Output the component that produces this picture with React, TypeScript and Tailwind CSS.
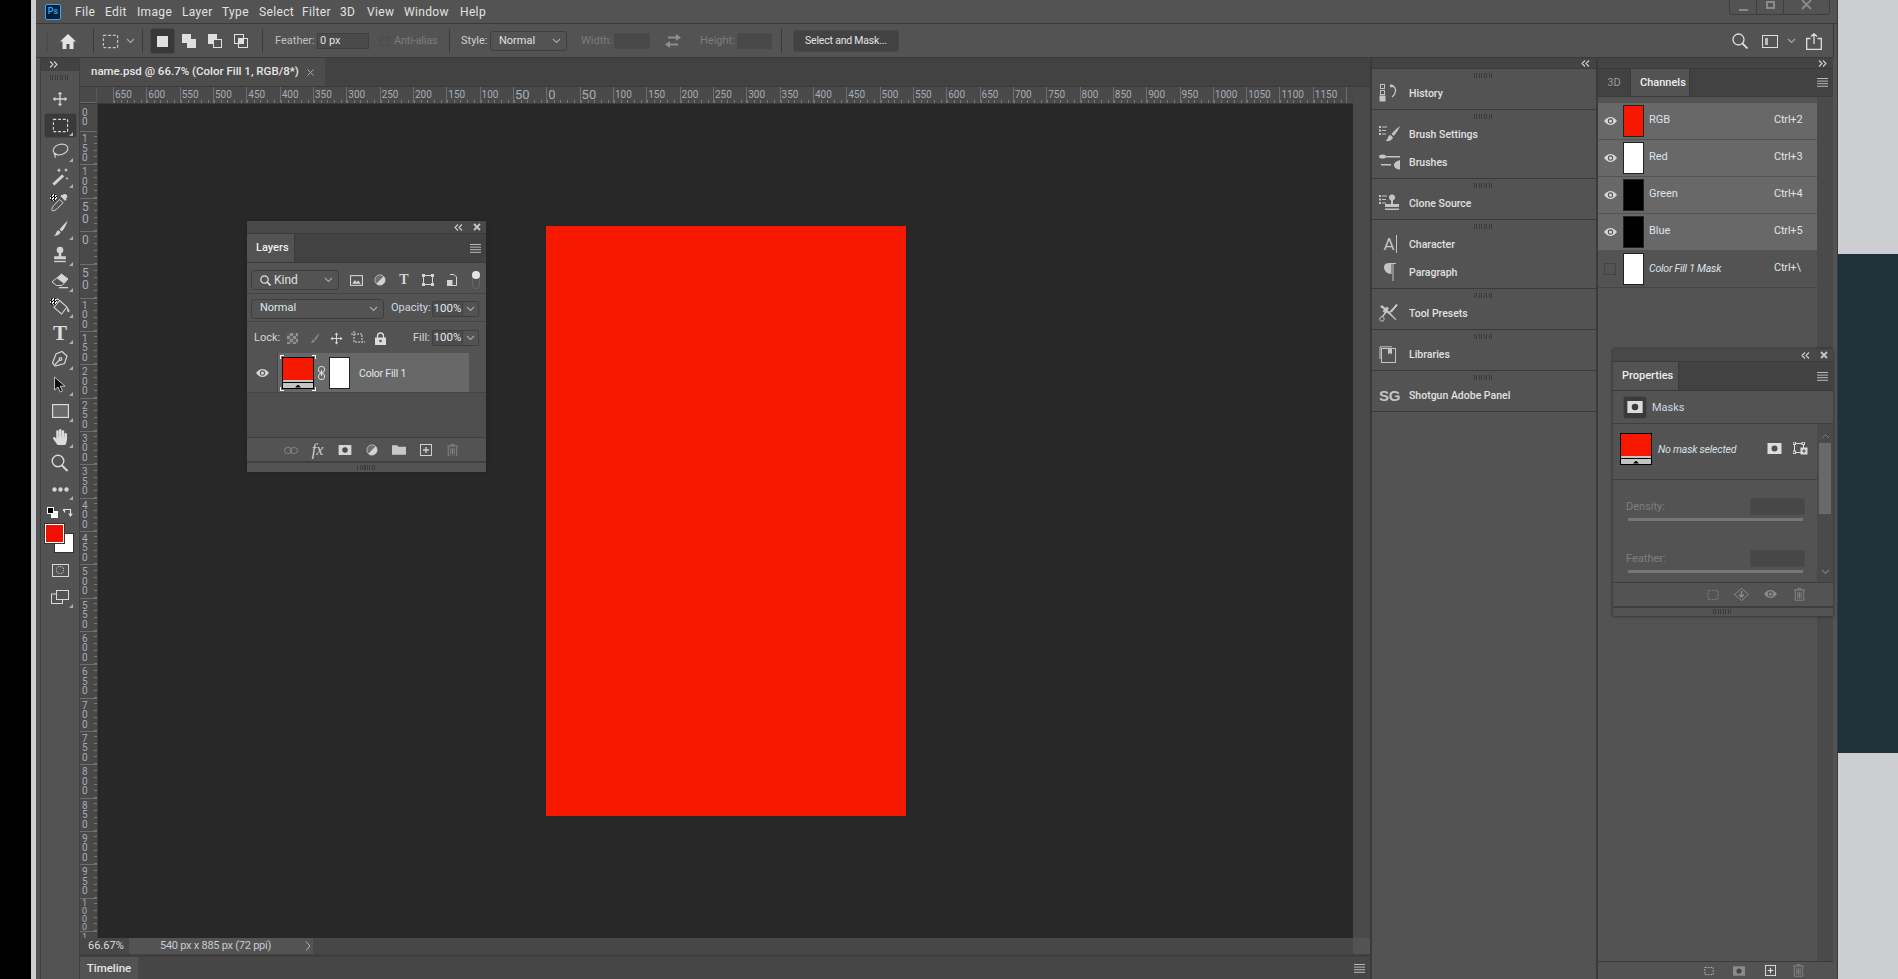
import React from "react";
import { FaHandPaper } from "react-icons/fa";

const Ic = ({ s = 18, c = "#d4d4d4", children, vb = "0 0 24 24" }: { s?: number; c?: string; children: React.ReactNode; vb?: string }) => (
  <svg width={s} height={s} viewBox={vb} fill={c} stroke="none" className="flex-none">
    {children}
  </svg>
);

const Chevrons = ({ dir = "left" }: { dir?: "left" | "right" }) => (
  <svg width="9" height="7" viewBox="0 0 9 7" fill="none" stroke="#d0d0d0" strokeWidth="1.1" className="flex-none">
    {dir === "left" ? <path d="M4 .5 1 3.5l3 3M8 .5l-3 3 3 3" /> : <path d="M1 .5l3 3-3 3M5 .5l3 3-3 3" />}
  </svg>
);
const Close = () => (
  <svg width="8" height="8" viewBox="0 0 8 8" stroke="#c8c8c8" strokeWidth="1.8" className="flex-none"><path d="M1 1l6 6M7 1 1 7" /></svg>
);
const Burger = () => (
  <svg width="11" height="9" viewBox="0 0 11 9" fill="#b8b8b8" className="flex-none">
    <rect y="0" width="11" height="1" /><rect y="2.6" width="11" height="1" /><rect y="5.2" width="11" height="1" /><rect y="7.8" width="11" height="1" />
  </svg>
);
const Chevron = ({ c = "#a8a8a8" }: { c?: string }) => (
  <svg width="9" height="6" viewBox="0 0 9 6" fill="none" stroke={c} strokeWidth="1.1" className="flex-none"><path d="M1 1l3.5 3.5L8 1" /></svg>
);
const Eye = ({ c = "#d6d6d6", w = 13 }: { c?: string; w?: number }) => (
  <svg width={w} height={w * 0.62} viewBox="0 0 16 10" className="flex-none">
    <path d="M0 5c2.5-3.4 5-5 8-5s5.500 1.600 8 5c-2.500 3.400-5 5-8 5S2.500 8.400 0 5z" fill={c} />
    <circle cx="8" cy="5" r="3.3" fill="#555" /><circle cx="8" cy="5" r="2" fill={c} />
  </svg>
);
const Grip = () => (
  <div className="h-[5px] w-[20px] flex-none bg-[repeating-linear-gradient(90deg,#3b3b3b_0,#3b3b3b_1px,transparent_1px,transparent_2.500px)]" />
);
const Tri = () => (
  <span className="absolute right-[6px] bottom-[2px] h-[4px] w-[4px] bg-[#b0b0b0] [clip-path:polygon(100%_0,100%_100%,0_100%)]" />
);
const Checker = () => (
  <span className="absolute left-[9px] top-[4px] h-[7px] w-[7px] rounded-full bg-[conic-gradient(#111_25%,#eee_0_50%,#111_0_75%,#eee_0)] bg-[length:3px_3px]" />
);

const BrushPath = "M21 2c-3 3-7 7-9.500 10.500l2.500 2.500C17 12 19.800 7 21 2zM10.500 13.500c-2 .5-2.800 1.700-3.300 3.500-.4 1.300-1.300 2.300-3 3 3.600.6 7.300-.6 8.500-4z";
const StampShape = (
  <g><circle cx="12" cy="6" r="4" /><path d="M10.500 9h3v4.500H19V17H5v-3.500h5.500z" /><rect x="5" y="19" width="14" height="1.600" /></g>
);
const ListDots = (
  <g><rect x="0" y="1" width="2" height="2" /><rect x="3" y="1.500" width="5" height="1" /><rect x="0" y="4.500" width="2" height="2" /><rect x="3" y="5" width="4" height="1" /><rect x="0" y="8" width="2" height="2" /><rect x="3" y="8.500" width="4" height="1" /></g>
);

const MarqueeIcon = ({ s = 18, c = "#d8d8d8" }: { s?: number; c?: string }) => (
  <svg width={s} height={s} viewBox="0 0 18 18" fill="none" stroke={c} strokeWidth="1.200" strokeDasharray="3 2" className="flex-none"><rect x="1.500" y="2.500" width="15" height="13" /></svg>
);
const HalfCircle = ({ s = 14, c = "#d4d4d4" }: { s?: number; c?: string }) => (
  <svg width={s} height={s} viewBox="0 0 14 14" className="flex-none">
    <circle cx="7" cy="7" r="6" fill="#6e6e6e" stroke={c} strokeWidth=".8" />
    <path d="M11.240 2.760A6 6 0 0 1 2.760 11.240z" fill={c} />
  </svg>
);
const Trash = ({ c = "#8b8b8b", s = 13 }: { c?: string; s?: number }) => (
  <svg width={s} height={s * 1.15} viewBox="0 0 13 15" fill="none" stroke={c} strokeWidth="1" className="flex-none">
    <path d="M0 2.500h13M4.500 2.500V.5h4v2M1.500 2.500v12h10v-12M4.500 5v7.500M6.500 5v7.500M8.500 5v7.500" />
  </svg>
);
const PlusSq = ({ c = "#d4d4d4", s = 12 }: { c?: string; s?: number }) => (
  <svg width={s} height={s} viewBox="0 0 12 12" fill="none" stroke={c} className="flex-none"><rect x=".5" y=".5" width="11" height="11" /><path d="M6 3v6M3 6h6" strokeWidth="1.300" /></svg>
);
const MaskIcon = ({ w = 14, h = 11, c = "#e0e0e0", d = "#505050" }: { w?: number; h?: number; c?: string; d?: string }) => (
  <svg width={w} height={h} viewBox="0 0 14 11" className="flex-none"><rect width="14" height="11" fill={c} /><circle cx="7" cy="5.500" r="3" fill={d} /></svg>
);

type Tool = { el: React.ReactNode; tri?: boolean; check?: boolean; sel?: boolean };
const tools: Tool[] = [
  { el: <Ic s={16}><path d="M12 1l3.500 4H13v6h6V8.500l4 3.500-4 3.500V13h-6v6h2.500L12 23l-3.500-4H11v-6H5v2.500L1 12l4-3.500V11h6V5H8.500z" /></Ic> },
  { el: <MarqueeIcon s={17} />, tri: true, sel: true },
  { el: <svg width="18" height="18" viewBox="0 0 18 18" fill="none" stroke="#d4d4d4" strokeWidth="1.100"><ellipse cx="9.500" cy="7.500" rx="7.500" ry="5.200" transform="rotate(-15 9.500 7.500)" /><path d="M3.500 11c-1 1.300.5 2 1.300 1.500.6-.5-.2-1.300-.8-.6-.3.800.6 2.200 0 4" /></svg>, tri: true },
  { el: <svg width="20" height="20" viewBox="0 0 20 20" fill="#d4d4d4"><path d="M12 7.500l2.200 1.800L4.500 18.500 2.300 16.500z" /><path d="M9 1l.7 1.600L11 3.300l-1.300.7L9 5.500l-.7-1.500L7 3.300l1.300-.7zM16 1l.6 1.300L18 3l-1.400.7L16 5l-.6-1.300L14 3l1.400-.7zM17 10l.5 1 1 .5-1 .5-.5 1-.5-1-1-.5 1-.5z" /></svg>, tri: true },
  { el: <svg width="20" height="20" viewBox="0 0 20 20" fill="#d4d4d4"><path d="M13 1.500c1.500-1.300 4-.3 4.300 1.500.2 1-.4 2-1.300 2.700l.6.800-1.400 1.400-4.800-4.800 1.400-1.400.8.600z" /><path d="M9.800 6.500 3.200 13c-1 1-.9 2.200-1.500 3.500-.3.800.4 1.700 1.400 1.300 1.300-.6 2.500-.5 3.500-1.500l6.400-6.500z" fill="none" stroke="#d4d4d4" /></svg>, check: true },
  { el: <Ic s={20}><path d={BrushPath} /></Ic>, tri: true },
  { el: <Ic s={20}>{StampShape}</Ic>, tri: true },
  { el: <svg width="20" height="20" viewBox="0 0 20 20"><path d="M11.500 3 18 8l-6 6.500H6.500L2 11z" fill="none" stroke="#d4d4d4" /><path d="M11.500 3 18 8l-4 4.500L7 7.500z" fill="#d4d4d4" /><rect x="9" y="16" width="9" height="1.300" fill="#d4d4d4" /></svg>, tri: true },
  { el: <svg width="20" height="20" viewBox="0 0 20 20" fill="none" stroke="#d4d4d4" strokeWidth="1.100"><path d="M9.500 3.500 17 10l-5.500 7L4 10.500z" /><path d="M5.500 5C5 3 7 1.500 9 2.500" /><path d="M17 10c1.500 1.500 2.500 3 2.500 4 0 1.500-2 1.500-2.200 0 0-1.200-.3-2.500-.3-4z" fill="#d4d4d4" stroke="none" /></svg>, check: true, tri: true },
  { el: <span className="font-['Liberation_Serif',serif] text-[21px] font-bold leading-none text-[#dcdcdc]">T</span>, tri: true },
  { el: <svg width="20" height="20" viewBox="0 0 20 20" fill="none" stroke="#d4d4d4" strokeWidth="1.200"><path d="M12 2.500l5 4.500-2.500 7.500-9.500 2.500L2.500 14 6 5z" /><path d="M5 15.500 9.500 11" /><circle cx="10.500" cy="10" r="1.300" /></svg>, tri: true },
  { el: <svg width="14" height="18" viewBox="0 0 14 18"><path d="M1.500 1v13l3.500-3 2.200 5 2.300-1-2.200-4.800H12z" fill="#111" stroke="#ddd" strokeWidth=".8" /></svg>, tri: true },
  { el: <svg width="17" height="14" viewBox="0 0 17 14"><rect x=".6" y=".6" width="15.800" height="12.800" fill="#6a6a6a" stroke="#e2e2e2" strokeWidth="1.100" /></svg>, tri: true },
  { el: <FaHandPaper size={16} color="#dcdcdc" />, tri: true },
  { el: <svg width="18" height="18" viewBox="0 0 18 18" fill="none" stroke="#d8d8d8" strokeWidth="1.400"><circle cx="7" cy="7" r="5.800" /><path d="M11 11.500 16.500 17" strokeWidth="2" /></svg> },
  { el: <svg width="17" height="5" viewBox="0 0 17 5" fill="#d4d4d4"><circle cx="2.500" cy="2.500" r="2.200" /><circle cx="8.500" cy="2.500" r="2.200" /><circle cx="14.500" cy="2.500" r="2.200" /></svg>, tri: true },
];

const dockGroups = [
  [{ i: <svg width="20" height="18" viewBox="0 0 20 18" fill="none" stroke="#c4c4c4"><rect x="1.500" y=".5" width="4" height="4" /><rect x="1.500" y="6.500" width="4" height="4" /><rect x="1" y="12" width="5" height="5" fill="#c4c4c4" /><path d="M11 2.500h4M11 1c4 .5 6 3 5.500 6.500-.3 2.500-2 4.500-3.500 5.500" strokeWidth="1.300" /></svg>, t: "History" }],
  [
    { i: <svg width="22" height="18" viewBox="0 0 22 18" fill="#c4c4c4"><g>{ListDots}</g><path d="M21 1c-3 2-6 5-8.500 8l2.300 2c2.300-3 4.700-6.400 6.200-10zM11.500 10c-1.500.3-2 1.200-2.500 2.500-.4 1.300-1 2.500-2.500 3.500 3 .5 6.500-.3 7.500-3.500z" /></svg>, t: "Brush Settings" },
    { i: <svg width="22" height="16" viewBox="0 0 22 16" fill="#c4c4c4"><ellipse cx="3.500" cy="2.500" rx="3.500" ry="2" /><rect x="7" y="2" width="14" height="1.500" /><rect x="2" y="10" width="10" height="1.500" /><path d="M21 6v9.500c-3 0-6-1.500-6-4.500 0-2.500 3-4 6-5z" /></svg>, t: "Brushes" },
  ],
  [{ i: <svg width="22" height="18" viewBox="0 0 22 18" fill="#c4c4c4"><g>{ListDots}</g><circle cx="13" cy="3.500" r="3" /><path d="M12 6h2v4h6v3H6v-3h6z" /><rect x="6" y="14.500" width="14" height="1.500" /></svg>, t: "Clone Source" }],
  [
    { i: <div className="flex w-[22px] items-center justify-center gap-[1px]"><span className="text-[17px] leading-none text-[#c4c4c4]">A</span><span className="h-[18px] w-px bg-[#c4c4c4]" /></div>, t: "Character" },
    { i: <svg width="12" height="18" viewBox="0 0 12 18" fill="#c4c4c4" className="ml-[5px]"><path d="M0 4c0-2.500 2-4 5-4h7v1H9.500v17H8.500V1h-1v10C3 11 0 8 0 4z" /></svg>, t: "Paragraph" },
  ],
  [{ i: <svg width="20" height="18" viewBox="0 0 20 18" fill="#c4c4c4"><path d="M1 3 3 1l3.500 3 1.500-1.500 2 2L8.500 6l9 9.500-1 .5L7 7.500 5.500 9l-2-2L5 5.500z" /><path d="M18 1 10 9 8 7 3 13" stroke="#c4c4c4" strokeWidth="1.500" fill="none" /><circle cx="3" cy="15" r="2.200" fill="#4f4f4f" stroke="#c4c4c4" /><path d="M18 .5 12 8" stroke="#c4c4c4" strokeWidth="2" /></svg>, t: "Tool Presets" }],
  [{ i: <svg width="17" height="17" viewBox="0 0 17 17" fill="none" stroke="#c4c4c4"><path d="M1 13V.8h12" /><rect x="2.500" y="2.500" width="14" height="14" /><path d="M9 2.500h4v6L11 7 9 8.500z" fill="#c4c4c4" stroke="none" /></svg>, t: "Libraries" }],
  [{ i: <span className="w-[22px] font-['Liberation_Sans',sans-serif] text-[15px] font-bold leading-none tracking-[-0.3px] text-[#c4c4c4]">SG</span>, t: "Shotgun Adobe Panel" }],
];

const channels = [
  { n: "RGB", k: "Ctrl+2", th: "bg-[#f71800]", on: true },
  { n: "Red", k: "Ctrl+3", th: "bg-white", on: true },
  { n: "Green", k: "Ctrl+4", th: "bg-black", on: true },
  { n: "Blue", k: "Ctrl+5", th: "bg-black", on: true },
  { n: "Color Fill 1 Mask", k: "Ctrl+\\", th: "bg-white", on: false },
];

const hLabels = [650, 600, 550, 500, 450, 400, 350, 300, 250, 200, 150, 100, 50, 0, 50, 100, 150, 200, 250, 300, 350, 400, 450, 500, 550, 600, 650, 700, 750, 800, 850, 900, 950, 1000, 1050, 1100, 1150, 1200];
const vLabels = [150, 100, 50, 0, 50, 100, 150, 200, 250, 300, 350, 400, 450, 500, 550, 600, 650, 700, 750, 800, 850, 900, 950, 1000];
const menus = [
  ["File", "w-[30px]"], ["Edit", "w-[32px]"], ["Image", "w-[45px]"], ["Layer", "w-[40px]"], ["Type", "w-[37px]"], ["Select", "w-[43px]"], ["Filter", "w-[38px]"], ["3D", "w-[27px]"], ["View", "w-[37px]"], ["Window", "w-[56px]"], ["Help", "w-[34px]"],
];

const LayerThumb = () => (
  <div className="flex h-[32px] w-[32px] flex-col border border-black bg-[#c4c4c4]">
    <div className="h-[22px] flex-none bg-[#f71800]" />
    <div className="mt-[2px] h-px bg-black" />
    <div className="mx-auto mt-[2px] h-[3px] w-[6px] bg-black [clip-path:polygon(50%_0,100%_100%,0_100%)]" />
  </div>
);
const Sep = () => <div className="h-[24px] w-px flex-none bg-[#3a3a3a]" />;

const Field = ({ t }: { t: string }) => (
  <div className="flex h-[16px] flex-none">
    <div className="flex w-[31px] items-center justify-center rounded-l-[2px] border border-[#3f3f3f] bg-[#4c4c4c] text-[11.500px] text-[#e4e8ec]">{t}</div>
    <div className="flex w-[16px] items-center justify-center rounded-r-[2px] border border-l-0 border-[#3f3f3f]"><Chevron /></div>
  </div>
);

const PanelHead = () => (
  <div className="flex h-[13px] flex-none items-center justify-end gap-[10px] border-b border-[#3a3a3a] bg-[#484848] pr-[5px]">
    <Chevrons /><Close />
  </div>
);

export default function App() {
  return (
    <div className="relative flex h-[979px] w-[1898px] overflow-hidden bg-black font-['Roboto',sans-serif] text-[11px] text-[#dcdcdc]">
      <div className="w-[31px] flex-none bg-black" />
      <div className="w-[5px] flex-none bg-[#cdced2]" />

      {/* Application */}
      <div className="flex w-[1802px] flex-none flex-col border-r border-[#3a3a3a] bg-[#535353]">
        {/* Menu bar */}
        <div className="flex h-[24px] flex-none items-center border-b border-[#3a3a3a] pl-[9px]">
          <div className="mr-[14px] flex h-[16px] w-[16px] flex-none items-center justify-center rounded-[2px] border border-[#31a8ff] bg-[#001e36] text-[9px] font-medium leading-none text-[#31a8ff]">Ps</div>
          {menus.map(([m, w]) => (
            <div key={m} className={`${w} flex-none text-[12px] tracking-[0.35px] text-[#e2e2e2]`}>{m}</div>
          ))}
          <div className="ml-auto mr-[7px] flex h-[15px] w-[101px] self-start rounded-b-[3px] border border-t-0 border-[#3f3f3f]">
            <div className="flex w-[27px] items-end justify-center border-r border-[#3f3f3f] pb-[3px]"><div className="h-[2px] w-[9px] bg-[#8a8a8a]" /></div>
            <div className="flex w-[27px] items-start justify-center border-r border-[#3f3f3f] pt-[1px]"><div className="h-[8px] w-[9px] border-2 border-[#8a8a8a]" /></div>
            <div className="flex flex-1 items-start justify-center"><svg width="11" height="10" viewBox="0 0 11 10" stroke="#8a8a8a" strokeWidth="1.800"><path d="M1 0l9 9M10 0 1 9" /></svg></div>
          </div>
        </div>

        {/* Options bar */}
        <div className="mr-[3px] flex h-[34px] flex-none items-center border-r border-b border-[#3a3a3a] pt-[1px]">
          <div className="ml-[10px] h-[20px] w-[2px] flex-none bg-[repeating-linear-gradient(0deg,#444_0,#444_1px,transparent_1px,transparent_2px)]" />
          <div className="ml-[12px] flex-none"><svg width="16" height="15" viewBox="0 0 16 15" fill="#e4e4e4"><path d="M8 0 0 7.500h2.500V15h4v-5h3v5h4V7.500H16z" /></svg></div>
          <div className="ml-[17px]"><Sep /></div>
          <div className="ml-[8px]"><MarqueeIcon s={17} c="#c8c8c8" /></div>
          <div className="ml-[7px]"><Chevron /></div>
          <div className="ml-[7px]"><Sep /></div>
          <div className="ml-[7px] flex h-[26px] w-[25px] flex-none items-center justify-center rounded-[3px] border border-[#474747] bg-[#383838]"><div className="h-[11px] w-[11px] bg-[#e0e0e0]" /></div>
          <div className="relative ml-[7px] h-[14px] w-[14px] flex-none"><div className="absolute left-0 top-0 h-[9px] w-[9px] bg-[#e0e0e0]" /><div className="absolute bottom-0 right-0 h-[9px] w-[9px] bg-[#e0e0e0]" /></div>
          <div className="relative ml-[12px] h-[14px] w-[14px] flex-none"><div className="absolute left-0 top-0 h-[10px] w-[9px] bg-[#e0e0e0]" /><div className="absolute bottom-0 right-0 h-[9px] w-[9px] border border-[#e0e0e0] bg-[#535353]" /></div>
          <div className="relative ml-[12px] h-[14px] w-[14px] flex-none"><div className="absolute left-0 top-0 h-[10px] w-[10px] border border-[#e0e0e0]" /><div className="absolute bottom-0 right-0 h-[10px] w-[10px] border border-[#e0e0e0]" /><div className="absolute left-[4px] top-[4px] h-[5px] w-[5px] bg-[#e0e0e0]" /></div>
          <div className="ml-[14px]"><Sep /></div>
          <div className="ml-[12px] w-[42px] flex-none text-[#c0c0c0]">Feather:</div>
          <div className="flex h-[16px] w-[52px] flex-none items-center border border-[#3f3f3f] bg-[#4a4a4a] pl-[2px] text-[#e0e0e0]">0 px</div>
          <div className="ml-[11px] h-[9px] w-[9px] flex-none rounded-[1px] border border-[#4a4a4a]" />
          <div className="ml-[5px] w-[50px] flex-none tracking-[-0.2px] text-[#7c7c7c]">Anti-alias</div>
          <div className="ml-[5px]"><Sep /></div>
          <div className="ml-[11px] w-[29px] flex-none text-[#d0d0d0]">Style:</div>
          <div className="flex h-[20px] w-[77px] flex-none items-center justify-between rounded-[3px] border border-[#3f3f3f] pl-[8px] pr-[5px] text-[#e0e0e0]">Normal<Chevron /></div>
          <div className="ml-[14px] w-[33px] flex-none text-[#7c7c7c]">Width:</div>
          <div className="h-[16px] w-[36px] flex-none border border-[#4a4a4a] bg-[#484848]" />
          <div className="ml-[15px] flex-none"><svg width="16" height="14" viewBox="0 0 16 14" fill="#8e8e8e"><path d="M11 0l5 3.500L11 7V4.500H3v-2h8zM5 7v2.500h8v2H5V14L0 10.500z" /></svg></div>
          <div className="ml-[19px] w-[37px] flex-none text-[#7c7c7c]">Height:</div>
          <div className="h-[16px] w-[35px] flex-none border border-[#4a4a4a] bg-[#484848]" />
          <div className="ml-[9px]"><Sep /></div>
          <div className="ml-[11px] flex h-[22px] w-[106px] flex-none items-center justify-center rounded-[3px] border border-[#484848] bg-[#424242] text-[10.500px] tracking-[-0.2px] text-[#e4e4e4]">Select and Mask...</div>
          <div className="ml-auto flex items-center pr-[11px]">
            <svg width="16" height="16" viewBox="0 0 16 16" fill="none" stroke="#dedede" strokeWidth="1.300"><circle cx="6.500" cy="6.500" r="5.500" /><path d="M10.500 10.500 15.500 15.500" strokeWidth="1.800" /></svg>
            <div className="ml-[14px] flex h-[13px] w-[16px] flex-none items-center border border-[#dedede] pl-[2px]"><div className="h-[7px] w-[3px] bg-[#bbb]" /></div>
            <div className="ml-[9px]"><Chevron /></div>
            <svg className="ml-[10px]" width="16" height="17" viewBox="0 0 16 17" fill="none" stroke="#dedede" strokeWidth="1.300"><path d="M4.500 5.500H.7v10.800h14.600V5.500h-3.800M8 11V1M5 3.500 8 .8l3 2.700" /></svg>
          </div>
        </div>

        {/* Main row */}
        <div className="flex min-h-0 flex-1">
          <div className="w-[4px] flex-none" />
          {/* Tools */}
          <div className="flex w-[40px] flex-none flex-col border-x border-[#3f3f3f]">
            <div className="flex h-[13px] flex-none items-center bg-[#424242] pl-[8px]"><Chevrons dir="right" /></div>
            <div className="flex h-[15px] flex-none justify-center pt-[3px]"><div className="mt-[1px]"><Grip /></div></div>
            {tools.map((t, i) => (
              <div key={i} className="relative flex h-[26px] flex-none items-center justify-center">
                {t.sel ? <div className="flex h-[25px] w-[33px] items-center justify-center rounded-[3px] border border-[#4a4a4a] bg-[#3a3a3a]">{t.el}</div> : t.el}
                {t.tri ? <Tri /> : null}
                {t.check ? <Checker /> : null}
              </div>
            ))}
            {/* colours */}
            <div className="mt-[4px] flex h-[13px] flex-none items-center justify-between pl-[6px] pr-[6px]">
              <div className="relative h-[11px] w-[11px]"><div className="absolute bottom-0 right-0 h-[7px] w-[7px] bg-white" /><div className="absolute left-0 top-0 h-[7px] w-[7px] border border-white bg-black" /></div>
              <svg width="11" height="11" viewBox="0 0 11 11" fill="none" stroke="#e0e0e0" strokeWidth="1.100"><path d="M2.500 5.500V2.500H8.500V8M1 3.800l1.500-1.800M1 2.300 2.500 4M6.800 6.500 8.500 9l1.700-2.500" /></svg>
            </div>
            <div className="relative mt-[5px] h-[31px] flex-none">
              <div className="absolute left-[13px] top-[9px] h-[20px] w-[20px] border border-[#333] bg-white" />
              <div className="absolute left-[4px] top-[0px] h-[19px] w-[19px] border border-white bg-[#ee1000] outline outline-1 outline-[#333]" />
            </div>
            <div className="mt-[2px] flex h-[26px] flex-none items-center justify-center">
              <div className="flex h-[13px] w-[17px] items-center justify-center border border-[#d8d8d8]"><div className="h-[8px] w-[8px] rounded-full border border-dotted border-[#d8d8d8]" /></div>
            </div>
            <div className="relative flex h-[27px] flex-none items-center justify-center">
              <svg width="18" height="14" viewBox="0 0 18 14" fill="none" stroke="#d8d8d8"><rect x=".5" y="4" width="11" height="9.500" /><rect x="5.500" y=".5" width="12" height="9" fill="#535353" /></svg>
              <Tri />
            </div>
          </div>

          {/* Document column */}
          <div className="flex w-[1290px] flex-none flex-col">
            <div className="flex h-[29px] flex-none border-b border-[#3a3a3a] bg-[#424242]">
              <div className="flex w-[245px] flex-none items-center bg-[#4c4c4c] pl-[11px] text-[11.500px] font-medium text-[#e6e6e6]">
                <span className="w-[209px] flex-none whitespace-nowrap">name.psd @ 66.7% (Color Fill 1, RGB/8*)</span>
                <svg className="ml-[7px]" width="7" height="7" viewBox="0 0 7 7" stroke="#a8a8a8"><path d="M.5.5l6 6M6.500.5l-6 6" /></svg>
              </div>
            </div>
            {/* Horizontal ruler */}
            <div className="flex h-[17px] flex-none">
              <div className="flex w-[1273px] flex-none overflow-hidden border-b border-[#3a3a3a] bg-[#494949]">
                <div className="w-[17px] flex-none border-r border-[#5a5a5a] bg-[linear-gradient(#6a6a6a,#6a6a6a)] bg-[length:100%_1px] bg-bottom bg-no-repeat" />
                <div className="w-[16px] flex-none" />
                {hLabels.map((n, i) =>
                  i === hLabels.length - 1 ? (
                    <div key={i} className="h-full w-[6px] flex-none border-l border-[#6e6e6e]" />
                  ) : (
                    <div key={i} className="relative h-full w-[33.330px] flex-none border-l border-[#6e6e6e]">
                      <span className={n <= 50 ? "absolute left-[1px] top-0 text-[13px] leading-[15px] text-[#a5adb8]" : "absolute left-[1px] top-[2px] text-[10px] leading-[12px] text-[#a5adb8]"}>{n}</span>
                      <div className="absolute bottom-0 left-0 h-[3px] w-full bg-[repeating-linear-gradient(90deg,#787878_0,#787878_1px,transparent_1px,transparent_6.660px)]" />
                    </div>
                  )
                )}
              </div>
              <div className="w-[17px] flex-none bg-[#4a4a4a]" />
            </div>
            {/* Ruler + canvas */}
            <div className="flex min-h-0 flex-1">
              <div className="flex w-[18px] flex-none flex-col overflow-hidden border-r border-[#3a3a3a] bg-[#494949]">
                <div className="h-[23px] w-[8px] flex-none overflow-hidden pl-[2px] pt-[4px] text-[10px] leading-[9px] text-[#a5adb8] [word-break:break-all] box-content">00</div>
                {vLabels.map((n, i) => (
                  <div key={i} className="relative h-[33.330px] w-full flex-none border-t border-[#6e6e6e]">
                    <div className={n <= 50 ? "ml-[2px] mt-[2px] w-[8px] text-[12px] leading-[12px] text-[#a5adb8] [word-break:break-all]" : n >= 1000 ? "ml-[2px] mt-0 w-[8px] text-[9px] leading-[8px] text-[#a5adb8] [word-break:break-all]" : "ml-[2px] mt-[2px] w-[8px] text-[10px] leading-[9.500px] text-[#a5adb8] [word-break:break-all]"}>
                      {n}
                    </div>
                    <div className="absolute right-0 top-0 h-full w-[3px] bg-[repeating-linear-gradient(0deg,#787878_0,#787878_1px,transparent_1px,transparent_6.660px)]" />
                  </div>
                ))}
                <div className="h-[11px] flex-none border-t border-[#6e6e6e] pl-[2px] text-[9px] leading-[10px] text-[#a5adb8]">1</div>
              </div>
              <div className="min-w-0 flex-1 bg-[#282828]">
                <div className="ml-[448px] mt-[122px] h-[590px] w-[360px] bg-[#f71800]" />
              </div>
              <div className="w-[17px] flex-none bg-[#4a4a4a]" />
            </div>
            {/* Status */}
            <div className="flex h-[16px] flex-none items-center bg-[#474747]">
              <div className="w-[49px] flex-none pl-[8px] text-[#dcdcdc]">66.67%</div>
              <div className="flex h-full w-[184px] flex-none items-center bg-[#535353] pl-[31px] text-[#c4ccd4]">
                <span className="w-[145px] flex-none whitespace-nowrap tracking-[-0.25px]">540 px x 885 px (72 ppi)</span>
                <svg width="6" height="10" viewBox="0 0 6 10" fill="none" stroke="#b8b8b8"><path d="M1 .5 5 5l-4 4.500" /></svg>
              </div>
              <div className="ml-auto h-full w-[17px] bg-[#535353]" />
            </div>
            {/* Timeline */}
            <div className="flex h-[25px] flex-none flex-col border-t-[3px] border-[#3f3f3f] bg-[#464646]">
              <div className="flex flex-1 items-center justify-between pr-[5px]">
                <div className="flex h-full w-[58px] items-center justify-center bg-[#535353] pt-[2px] text-[11.500px] font-medium text-[#e6e6e6]">Timeline</div>
                <Burger />
              </div>
            </div>
          </div>

          <div className="w-[2px] flex-none bg-[#3a3a3a]" />
          {/* Collapsed dock */}
          <div className="flex w-[224px] flex-none flex-col">
            <div className="flex h-[11px] flex-none items-center justify-end border-b border-[#3a3a3a] bg-[#444444] pr-[6px]"><Chevrons /></div>
            {dockGroups.map((g, i) => (
              <div key={i} className="flex flex-none flex-col border-b border-[#3a3a3a] pb-[2px]">
                <div className="flex h-[10px] flex-none justify-center pt-[4px]"><Grip /></div>
                <div className="flex flex-col">
                  {g.map((r) => (
                    <div key={r.t} className="flex h-[28px] flex-none items-center pl-[7px]">
                      <div className="flex w-[30px] flex-none items-center">{r.i}</div>
                      <span className="pt-[2px] text-[10.500px] font-medium text-[#e0e0e0]">{r.t}</span>
                    </div>
                  ))}
                </div>
              </div>
            ))}
          </div>
          <div className="w-[2px] flex-none bg-[#3a3a3a]" />
          {/* Right column */}
          <div className="flex w-[235px] flex-none flex-col">
            <div className="flex h-[11px] flex-none items-center justify-end border-b border-[#3a3a3a] bg-[#444444] pr-[6px]"><Chevrons dir="right" /></div>
            <div className="flex h-[28px] flex-none items-stretch border-b border-[#3a3a3a] bg-[#424242]">
              <div className="flex w-[33px] items-center justify-center border-r border-[#3a3a3a] pt-[1px] text-[#9a9a9a]">3D</div>
              <div className="flex w-[59px] items-center border-r border-[#3a3a3a] bg-[#535353] pl-[9px] pt-[2px] font-medium text-[#eeeeee]">Channels</div>
              <div className="ml-auto flex items-center pr-[5px]"><Burger /></div>
            </div>
            <div className="flex min-h-0 flex-1">
              <div className="flex flex-1 flex-col pt-[6px]">
                {channels.map((c) => (
                  <div key={c.n} className={c.on ? "flex h-[37px] flex-none items-center border-b border-[#535353] bg-[#686868] pl-[6px] pr-[15px]" : "flex h-[37px] flex-none items-center border-b border-[#444] pl-[6px] pr-[15px]"}>
                    <div className="flex w-[19px] flex-none items-center">
                      {c.on ? <Eye /> : <div className="h-[12px] w-[12px] border border-[#444]" />}
                    </div>
                    <div className={`${c.th} h-[32px] w-[21px] flex-none border border-[#222]`} />
                    <span className={c.on ? "mb-[1px] ml-[5px] w-[125px] flex-none text-[#dfe3e8]" : "mb-[1px] ml-[5px] w-[125px] flex-none text-[10.500px] italic tracking-[-0.2px] text-[#dfe3e8]"}>{c.n}</span>
                    <span className="mb-[1px] tracking-[-0.2px] text-[#dfe3e8]">{c.k}</span>
                  </div>
                ))}
                <div className="flex-1" />
              </div>
              <div className="w-[16px] flex-none bg-[#4a4a4a]" />
            </div>
            <div className="flex h-[18px] flex-none items-center border-t border-[#3a3a3a] pl-[106px]">
              <MarqueeIcon s={10} c="#e0e0e0" />
              <div className="ml-[19px]"><MaskIcon w={12} h={10} c="#8b8b8b" d="#444" /></div>
              <div className="ml-[20px]"><PlusSq s={11} c="#e0e0e0" /></div>
              <div className="ml-[17px]"><Trash s={11} /></div>
            </div>
          </div>
        </div>
      </div>

      {/* Desktop behind the app */}
      <div className="flex min-w-0 flex-1 flex-col">
        <div className="h-[254px] flex-none bg-[#cdced2]" />
        <div className="h-[499px] flex-none bg-[#21333a]" />
        <div className="flex-1 bg-[#cdced2]" />
      </div>

      {/* Layers panel */}
      <div className="absolute left-[247px] top-[221px] flex h-[251px] w-[239px] flex-col bg-[#535353] shadow-[0_0_3px_#222]">
        <PanelHead />
        <div className="flex h-[29px] flex-none items-stretch border-b border-[#3a3a3a] bg-[#424242]">
          <div className="flex w-[48px] items-center border-r border-[#3a3a3a] bg-[#535353] pl-[9px] font-medium text-[#eeeeee]">Layers</div>
          <div className="ml-auto flex items-center pr-[5px]"><Burger /></div>
        </div>
        <div className="flex h-[31px] flex-none items-center border-b border-[#444] pl-[4px] pt-[4px]">
          <div className="flex h-[20px] w-[88px] flex-none items-center rounded-[3px] border border-[#3f3f3f] pl-[8px] pr-[5px] text-[12px] text-[#e0e0e0]">
            <svg width="11" height="11" viewBox="0 0 11 11" fill="none" stroke="#e4e4e4" strokeWidth="1.200"><circle cx="4.500" cy="4.500" r="3.700" /><path d="M7.300 7.300 10.500 10.500" strokeWidth="1.600" /></svg>
            <span className="ml-[3px]">Kind</span><span className="ml-auto"><Chevron /></span>
          </div>
          <div className="ml-[5px] flex w-[24px] flex-none justify-center"><svg width="13" height="11" viewBox="0 0 12 10"><rect x=".5" y=".5" width="11" height="9" fill="none" stroke="#d4d4d4" /><path d="M2 8l2.500-3.500 1.500 2 1.500-1.500L10 8z" fill="#d4d4d4" /></svg></div>
          <div className="flex w-[24px] flex-none justify-center"><HalfCircle s={12} /></div>
          <div className="w-[24px] flex-none text-center font-['Liberation_Serif',serif] text-[14px] font-bold leading-none text-[#d8d8d8]">T</div>
          <div className="flex w-[24px] flex-none justify-center"><svg width="12" height="12" viewBox="0 0 12 12" fill="none" stroke="#d4d4d4"><rect x="1.500" y="1.500" width="9" height="9" /><rect x="0" y="0" width="2.500" height="2.500" fill="#d4d4d4" /><rect x="9.500" y="0" width="2.500" height="2.500" fill="#d4d4d4" /><rect x="0" y="9.500" width="2.500" height="2.500" fill="#d4d4d4" /><rect x="9.500" y="9.500" width="2.500" height="2.500" fill="#d4d4d4" /></svg></div>
          <div className="flex w-[24px] flex-none justify-center"><svg width="10" height="12" viewBox="0 0 10 12"><path d="M3 .5h4l2.500 2.500v8.500h-6.500" fill="none" stroke="#d4d4d4" /><rect x="0" y="6" width="5.500" height="6" fill="#d4d4d4" /></svg></div>
          <div className="flex w-[24px] flex-none justify-center"><div className="relative h-[18px] w-[8px] rounded-full border border-[#666]"><div className="absolute -left-px -top-px h-[8px] w-[8px] rounded-full bg-[#e4e4e4]" /></div></div>
        </div>
        <div className="flex h-[28px] flex-none items-center border-b border-[#444] pl-[4px] pt-[2px]">
          <div className="flex h-[20px] w-[133px] flex-none items-center justify-between rounded-[3px] border border-[#3f3f3f] pl-[8px] pr-[5px] text-[#dfe6ee]">Normal<Chevron /></div>
          <span className="ml-[7px] w-[41px] flex-none whitespace-nowrap text-[#cfd8e2]">Opacity:</span>
          <Field t="100%" />
        </div>
        <div className="flex h-[31px] flex-none items-center pl-[7px] pt-[1px]">
          <span className="w-[27px] flex-none text-[#cfd8e2]">Lock:</span>
          <div className="flex w-[22px] flex-none justify-center"><div className="h-[11px] w-[11px] bg-[conic-gradient(#8f8f8f_25%,#5f5f5f_0_50%,#8f8f8f_0_75%,#5f5f5f_0)] bg-[length:6px_6px]" /></div>
          <div className="flex w-[22px] flex-none justify-center"><Ic s={13} c="#868686"><path d={BrushPath} /></Ic></div>
          <div className="flex w-[22px] flex-none justify-center"><Ic s={13} c="#d8d8d8"><path d="M12 1l3.500 4H13v6h6V8.500l4 3.500-4 3.500V13h-6v6h2.500L12 23l-3.500-4H11v-6H5v2.500L1 12l4-3.500V11h6V5H8.500z" /></Ic></div>
          <div className="flex w-[22px] flex-none justify-center"><svg width="14" height="14" viewBox="0 0 14 14" fill="none" stroke="#d8d8d8"><path d="M0 3h11v8M3 0v11h11" strokeDasharray="2 1" /></svg></div>
          <div className="flex w-[22px] flex-none justify-center"><svg width="11" height="13" viewBox="0 0 11 13"><path d="M2.500 6V4a3 3 0 0 1 6 0v2" fill="none" stroke="#dcdcdc" strokeWidth="1.300" /><rect y="5.500" width="11" height="7.500" fill="#dcdcdc" /><circle cx="5.500" cy="9" r="1.300" fill="#555" /></svg></div>
          <span className="ml-[22px] w-[19px] flex-none text-[#cfd8e2]">Fill:</span>
          <Field t="100%" />
        </div>
        <div className="flex h-[40px] flex-none items-stretch border-b border-[#444]">
          <div className="flex w-[31px] flex-none items-center justify-center border-r border-[#444] pt-[2px]"><Eye /></div>
          <div className="flex w-[191px] flex-none items-center bg-[#686868] pl-[2px]">
            <div className="relative flex h-[36px] w-[36px] flex-none items-center justify-center">
              <LayerThumb />
              <span className="absolute left-0 top-0 h-[4px] w-[4px] border-l border-t border-white" />
              <span className="absolute right-0 top-0 h-[4px] w-[4px] border-r border-t border-white" />
              <span className="absolute left-0 bottom-0 h-[4px] w-[4px] border-l border-b border-white" />
              <span className="absolute right-0 bottom-0 h-[4px] w-[4px] border-r border-b border-white" />
            </div>
            <svg className="ml-[2px] flex-none" width="7" height="14" viewBox="0 0 7 14" fill="none" stroke="#dcdcdc"><rect x=".5" y=".5" width="6" height="6" rx="2.500" /><rect x=".5" y="7.500" width="6" height="6" rx="2.500" /><path d="M3.500 4v6" /></svg>
            <div className="ml-[4px] h-[32px] w-[21px] flex-none border border-[#222] bg-white" />
            <span className="ml-[9px] pt-[2px] text-[10.500px] tracking-[-0.2px] text-[#dfe6ee]">Color Fill 1</span>
          </div>
        </div>
        <div className="min-h-0 flex-1 border-b border-[#3f3f3f] bg-[#4e4e4e]" />
        <div className="flex h-[25px] flex-none items-center border-b-2 border-[#3f3f3f] pl-[30px] pt-[1px]">
          <div className="flex w-[27px] flex-none justify-center"><svg width="14" height="7" viewBox="0 0 14 7" fill="none" stroke="#888"><rect x=".5" y=".5" width="7" height="6" rx="3" /><rect x="6.500" y=".5" width="7" height="6" rx="3" /></svg></div>
          <span className="w-[27px] flex-none text-center font-['Liberation_Serif',serif] text-[16px] italic leading-none text-[#cfcfcf]">fx</span>
          <div className="flex w-[27px] flex-none justify-center"><MaskIcon w={14} h={10} c="#d6d6d6" d="#4a4a4a" /></div>
          <div className="flex w-[27px] flex-none justify-center"><HalfCircle s={12} /></div>
          <div className="flex w-[27px] flex-none justify-center"><svg width="14" height="10" viewBox="0 0 13 9" fill="#c8c8c8"><path d="M0 0h5l1 1.500h7V9H0z" /></svg></div>
          <div className="flex w-[27px] flex-none justify-center"><PlusSq s={12} c="#cfcfcf" /></div>
          <div className="flex w-[27px] flex-none justify-center"><Trash s={11} /></div>
        </div>
        <div className="flex h-[9px] flex-none justify-center pt-[2px]"><Grip /></div>
      </div>

      {/* Properties panel */}
      <div className="absolute left-[1613px] top-[349px] flex h-[267px] w-[220px] flex-col bg-[#535353] shadow-[0_0_3px_#222]">
        <PanelHead />
        <div className="flex h-[29px] flex-none items-stretch border-b border-[#3a3a3a] bg-[#424242]">
          <div className="flex w-[66px] items-center border-r border-[#3a3a3a] bg-[#535353] pl-[9px] font-medium text-[#eeeeee]">Properties</div>
          <div className="ml-auto flex items-center pr-[5px]"><Burger /></div>
        </div>
        <div className="flex h-[33px] flex-none items-center border-b border-[#3f3f3f] pl-[10px]">
          <div className="flex h-[23px] w-[24px] flex-none items-center justify-center rounded-[3px] border border-[#4a4a4a] bg-[#3a3a3a]"><MaskIcon w={16} h={12} c="#dcdcdc" d="#3a3a3a" /></div>
          <span className="ml-[5px] pt-[2px] text-[#cfd8e2]">Masks</span>
        </div>
        <div className="flex min-h-0 flex-1">
          <div className="flex min-w-0 flex-1 flex-col">
            <div className="flex h-[56px] flex-none items-center border-b border-[#3f3f3f] pl-[7px] pb-[6px]">
              <LayerThumb />
              <span className="ml-[6px] w-[109px] flex-none whitespace-nowrap pt-[2px] text-[10.500px] italic tracking-[-0.2px] text-[#d8e0e8]">No mask selected</span>
              <MaskIcon w={15} h={11} c="#dedede" d="#4f4f4f" />
              <svg className="ml-[11px]" width="15" height="13" viewBox="0 0 15 13" fill="none" stroke="#dedede"><rect x="1.500" y="1.500" width="9" height="9" /><rect x="0" y="0" width="2.500" height="2.500" fill="#535353" /><rect x="9" y="0" width="2.500" height="2.500" fill="#535353" /><rect x="0" y="9" width="2.500" height="2.500" fill="#535353" /><rect x="7.500" y="5.500" width="7" height="7" fill="#dedede" stroke="none" /><path d="M11 7v4M9 9h4" stroke="#535353" /></svg>
            </div>
            <div className="flex flex-col pl-[13px] pr-[12px] pt-[17px]">
              <div className="flex h-[18px] items-center justify-between"><span className="pt-[2px] text-[#7e7e7e]">Density:</span><div className="h-[17px] w-[55px] border border-[#4a4a4a] bg-[#474747]" /></div>
              <div className="ml-[2px] mr-[2px] mt-[3px] h-[3px] bg-[#767676]" />
              <div className="mt-[28px] flex h-[18px] items-center justify-between"><span className="pt-[2px] text-[#7e7e7e]">Feather:</span><div className="h-[17px] w-[55px] border border-[#4a4a4a] bg-[#474747]" /></div>
              <div className="ml-[2px] mr-[2px] mt-[3px] h-[3px] bg-[#767676]" />
            </div>
          </div>
          <div className="flex w-[16px] flex-none flex-col items-center bg-[#4a4a4a] pt-[9px]">
            <svg width="9" height="6" viewBox="0 0 9 6" fill="none" stroke="#7a7a7a"><path d="M1 5l3.500-3.500L8 5" /></svg>
            <div className="mt-[4px] h-[71px] w-[12px] flex-none bg-[#696969]" />
            <div className="mt-auto mb-[7px]"><Chevron c="#7a7a7a" /></div>
          </div>
        </div>
        <div className="flex h-[26px] flex-none items-center border-y border-[#3f3f3f] border-b-2 pl-[85px]">
          <div className="flex w-[29px] flex-none justify-center"><MarqueeIcon s={12} c="#8a8a8a" /></div>
          <div className="flex w-[29px] flex-none justify-center"><svg width="15" height="13" viewBox="0 0 15 13" fill="none" stroke="#8a8a8a"><path d="M7.500 .5 14.500 6.500 7.500 12.500.5 6.500z" /><path d="M7.500 3v6M5 6.500l2.500 2.500 2.500-2.500" strokeWidth="1.500" /></svg></div>
          <div className="flex w-[29px] flex-none justify-center"><Eye c="#8a8a8a" w={13} /></div>
          <div className="flex w-[29px] flex-none justify-center"><Trash s={11} /></div>
        </div>
        <div className="flex h-[8px] flex-none justify-center pt-[1px]"><Grip /></div>
      </div>
    </div>
  );
}
